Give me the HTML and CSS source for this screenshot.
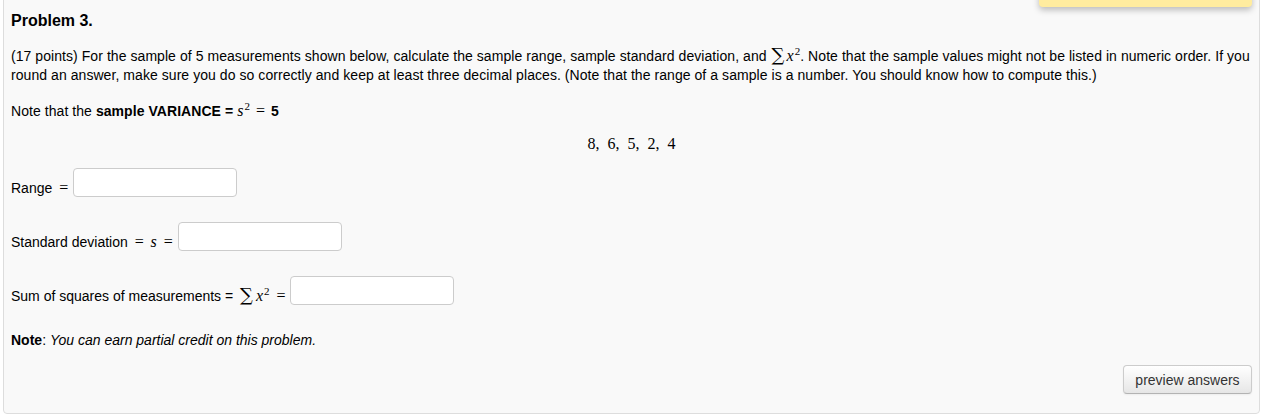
FILE: index.html
```html
<!DOCTYPE html>
<html lang="en">
<head>
    <meta charset="UTF-8">
    <meta name="viewport" content="width=device-width, initial-scale=1.0">
    <title>Problem 3</title>
    <link rel="stylesheet" href="styles.css">
</head>
<body>
    <div class="problem">
        <h2 class="title">Problem 3.</h2>

        <p class="text">(17 points) For the sample of 5 measurements shown below, calculate the sample range, sample standard deviation, and <span class="sum">&sum;</span><span class="math">x</span><sup class="sq">2</sup>. Note that the sample values might not be listed in numeric order. If you round an answer, make sure you do so correctly and keep at least three decimal places. (Note that the range of a sample is a number. You should know how to compute this.)</p>

        <p class="text variance">Note that the <b>sample VARIANCE =</b> <span class="math">s</span><sup class="sq">2</sup> <span class="eq">=</span> <b>5</b></p>

        <p class="data">8,&nbsp; 6,&nbsp; 5,&nbsp; 2,&nbsp; 4</p>

        <div class="answer">
            <span class="label">Range <span class="eq">=</span></span>
            <input type="text" class="field">
        </div>

        <div class="answer">
            <span class="label">Standard deviation <span class="eq">=</span> <span class="math">s</span> <span class="eq">=</span></span>
            <input type="text" class="field">
        </div>

        <div class="answer">
            <span class="label">Sum of squares of measurements = <span class="sum big">&sum;</span><span class="math">x</span><sup class="sq">2</sup> <span class="eq">=</span></span>
            <input type="text" class="field">
        </div>

        <p class="note"><b>Note</b>: <i>You can earn partial credit on this problem.</i></p>

        <div class="actions">
            <button type="button" class="preview">preview answers</button>
        </div>
    </div>

    <div class="tab"></div>
</body>
</html>
```

FILE: styles.css
```css
body {
    margin: 0;
    background: #fff;
    font-family: "Liberation Sans", Arial, sans-serif;
    font-size: 14px;
    color: #000;
    overflow: hidden;
}
.problem {
    margin: -6px 3px 0 3px;
    height: 420px;
    box-sizing: border-box;
    padding: 16px 7px 0 7px;
    background: #f9f9f9;
    border: 1px solid #ddd;
    border-radius: 4px;
}
.title {
    font-size: 16px;
    line-height: 20px;
    font-weight: bold;
    margin: 0 0 15px 0;
}
.text {
    margin: 0;
    line-height: 19px;
    letter-spacing: 0.06px;
}
.variance {
    margin-top: 16px;
}
.math {
    font-family: "Liberation Serif", "Times New Roman", serif;
    font-style: italic;
    font-size: 16px;
}
.sum {
    font-family: "DejaVu Serif", "Liberation Serif", serif;
    font-size: 18px;
    line-height: 1;
    margin: 0 2px 0 1px;
}
.sum.big {
    margin: 0 3px 0 3px;
}
.sq {
    font-family: "Liberation Serif", serif;
    font-size: 11px;
    line-height: 0;
    margin-left: 1px;
}
.eq {
    font-family: "Liberation Serif", serif;
    font-size: 16px;
    margin: 0 2px;
}
.label .eq {
    margin: 0 3px;
}
.data {
    margin: 13px 0 0 0;
    text-align: center;
    font-family: "Liberation Serif", "Times New Roman", serif;
    font-size: 16px;
    line-height: 19px;
}
.answer {
    display: flex;
    align-items: center;
    height: 29px;
    margin-top: 25px;
}
.data + .answer {
    margin-top: 15px;
}
.label {
    padding-top: 10px;
    line-height: 19px;
    white-space: pre;
}
.field {
    width: 164px;
    height: 29px;
    box-sizing: border-box;
    border: 1px solid #ccc;
    border-radius: 4px;
    background: #fff;
    padding: 4px 6px;
    margin: 0 0 0 2px;
}
.note {
    margin: 26px 0 0 0;
    line-height: 19px;
}
.actions {
    display: flex;
    justify-content: flex-end;
    margin-top: 15px;
}
.preview {
    font-family: "Liberation Sans", Arial, sans-serif;
    font-size: 14px;
    color: #333;
    width: 129px;
    height: 29px;
    padding: 0;
    border: 1px solid #ccc;
    border-bottom-color: #b3b3b3;
    border-radius: 4px;
    background: linear-gradient(#fff, #e6e6e6);
    box-shadow: inset 0 1px 0 rgba(255,255,255,0.2), 0 1px 2px rgba(0,0,0,0.05);
    cursor: pointer;
}
.tab {
    position: absolute;
    top: -10px;
    left: 1039px;
    width: 213px;
    height: 17px;
    background: #ffec9f;
    border-radius: 0 0 4px 4px;
    box-shadow: 0 3px 6px rgba(0,0,0,0.25);
}
```
